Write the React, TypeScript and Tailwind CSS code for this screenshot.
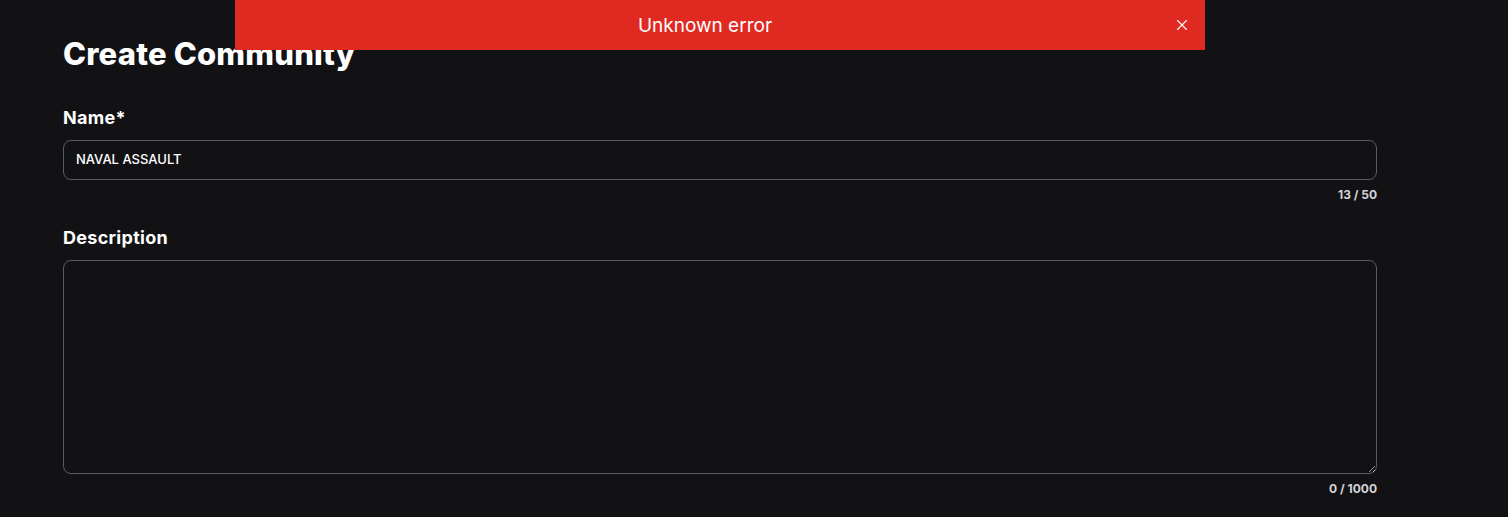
import { X } from 'lucide-react'

function Counter({ value }: { value: string }) {
  return (
    <div className="flex justify-end pt-[7px] text-[12px] font-bold leading-[16px] text-[#d4d4d8]">
      {value}
    </div>
  )
}

export default function App() {
  return (
    <div className="min-h-[517px] bg-[#121215] font-['Inter','Noto_Sans',sans-serif] text-white">
      <div className="relative ml-[63px] w-[1314px] pt-[34px]">
        {/* Toast */}
        <div className="absolute left-[172px] top-0 z-10 flex h-[50px] w-[970px] items-center justify-center bg-[#e02a21] pr-[30px]">
          <span className="text-[19px] leading-none text-white">Unknown error</span>
          <button className="absolute right-[14px] top-[16px] text-white">
            <X className="h-[18px] w-[18px]" strokeWidth={1.5} />
          </button>
        </div>

        <h1 className="text-[31px] font-extrabold leading-[40px] tracking-[0.2px]">Create Community</h1>

        <div className="mt-[32px]">
          <label className="block text-[18px] font-bold leading-[24px] tracking-[0.3px]">Name*</label>
          <div className="mt-[10px] flex h-[40px] items-center rounded-[8px] border border-[#5b5b66] px-[12px]">
            <span className="text-[13px] font-medium text-white">NAVAL ASSAULT</span>
          </div>
          <Counter value="13 / 50" />
        </div>

        <div className="mt-[23px]">
          <label className="block text-[18px] font-bold leading-[24px] tracking-[0.3px]">Description</label>
          <textarea
            className="mt-[10px] block h-[214px] w-full rounded-[8px] border border-[#5b5b66] bg-transparent px-[12px] py-[10px] text-[13px] outline-none"
            defaultValue=""
          />
          <Counter value="0 / 1000" />
        </div>
      </div>
    </div>
  )
}
